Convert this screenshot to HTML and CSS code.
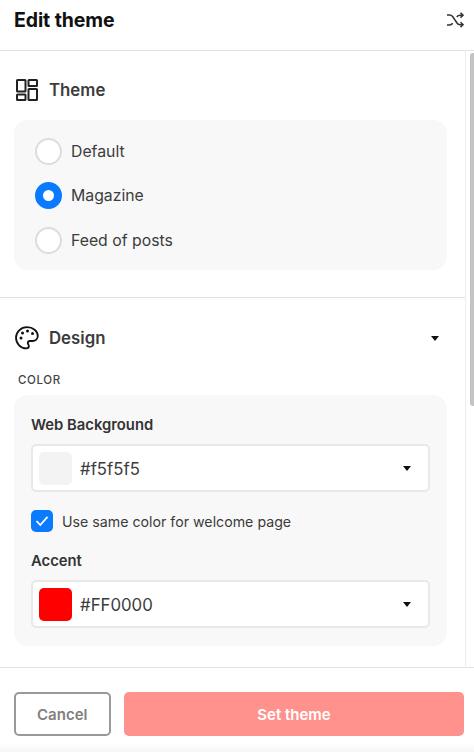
FILE: index.html
```html
<!DOCTYPE html>
<html lang="en">
<head>
<meta charset="utf-8">
<title>Edit theme</title>
<link rel="stylesheet" href="styles.css">
</head>
<body>
<div class="app">
  <header class="topbar">
    <h1 class="title">Edit theme</h1>
    <svg class="shuffle" width="18" height="18" viewBox="0 0 18 18" fill="none" stroke="#333" stroke-width="1.5"><path d="M1 4h2.500c1.500 0 2.500.7 3.300 1.800l4.200 6.200c.7 1.100 1.700 1.700 3 1.700h2.500"/><path d="M1 14h2.500c1.500 0 2.500-.7 3.200-1.700M10.800 6c.8-1.200 1.800-1.800 3.200-1.800h2.500"/><path d="M14.500 1.800 17 4.200l-2.500 2.400M14.500 11.300l2.500 2.400-2.500 2.400"/></svg>
  </header>
  <div class="body">
    <main class="scroll">
      <section class="section theme">
        <div class="section-head">
          <svg class="section-icon" width="24" height="24" viewBox="0 0 24 24" fill="none" stroke="#222" stroke-width="2"><rect x="2" y="2" width="8.500" height="11.500" rx=".5"/><rect x="13.500" y="2" width="8.500" height="6" rx=".5"/><rect x="2" y="16.500" width="8.500" height="5.500" rx=".5"/><rect x="13.500" y="11" width="8.500" height="11" rx=".5"/></svg>
          <h2 class="section-title">Theme</h2>
        </div>
        <div class="panel radios">
          <div class="radio-row"><span class="radio"></span><span>Default</span></div>
          <div class="radio-row"><span class="radio on"></span><span>Magazine</span></div>
          <div class="radio-row"><span class="radio"></span><span>Feed of posts</span></div>
        </div>
      </section>
      <section class="section design">
        <div class="section-head">
          <svg class="section-icon" width="24" height="24" viewBox="0 0 24 24" fill="none" stroke="#111" stroke-width="1.800"><path d="M12 1.200C5.800 1.200 1 5.900 1 11.800c0 5.800 4.700 10.600 10.400 10.600 1.500 0 2.500-1 2.500-2.300 0-.7-.3-1.200-.6-1.700-.3-.4-.5-.9-.5-1.400 0-1.200 1-2 2.200-2h2.500c3 0 5.300-2.200 5.300-5C22.800 5 18 1.200 12 1.200Z"/><g fill="#111" stroke="none"><circle cx="6" cy="12" r="1.500"/><circle cx="7.500" cy="7" r="1.500"/><circle cx="12.500" cy="5" r="1.500"/><circle cx="17.500" cy="7.500" r="1.500"/></g></svg>
          <h2 class="section-title">Design</h2>
          <span class="caret head-caret"></span>
        </div>
        <div class="eyebrow">COLOR</div>
        <div class="panel fields">
          <div class="field-label">Web Background</div>
          <div class="select">
            <span class="swatch pale"></span>
            <span class="select-value">#f5f5f5</span>
            <span class="caret"></span>
          </div>
          <div class="check-row">
            <span class="check"><svg width="16" height="16" viewBox="0 0 16 16" fill="none" stroke="#fff" stroke-width="1.800"><path d="M2.500 8 6.300 12 13.500 3.800"/></svg></span>
            <span>Use same color for welcome page</span>
          </div>
          <div class="field-label">Accent</div>
          <div class="select">
            <span class="swatch red"></span>
            <span class="select-value">#FF0000</span>
            <span class="caret"></span>
          </div>
        </div>
      </section>
    </main>
    <div class="scrollbar"><div class="thumb"></div></div>
  </div>
  <footer class="footer">
    <button class="btn cancel">Cancel</button>
    <button class="btn primary">Set theme</button>
  </footer>
</div>
</body>
</html>
```
FILE: styles.css
```css
* { box-sizing: border-box; }
html, body { margin: 0; padding: 0; height: 100%; background: #fff; overflow: hidden; }
body { font-family: Inter, "Liberation Sans", sans-serif; color: #3a3a3a; }
.app { width: 474px; height: 752px; display: flex; flex-direction: column; }
.topbar { height: 51px; flex: none; padding: 0 10px 11px 14px; display: flex; align-items: center; justify-content: space-between; border-bottom: 1px solid #e2e2e2; }
.title { margin: 0; font-size: 19.500px; font-weight: 700; color: #111; letter-spacing: -0.1px; }
.body { flex: 1; min-height: 0; display: flex; }
.scroll { flex: 1; min-width: 0; overflow: hidden; }
.section { padding: 0 18px 0 14px; }
.theme { height: 247px; padding-top: 25px; border-bottom: 1px solid #e2e2e2; }
.design { padding-top: 26px; }
.section-head { display: flex; align-items: center; gap: 10px; height: 28px; }
.section-icon { flex: none; margin-left: 1px; }
.section-title { margin: 0; font-size: 16.800px; font-weight: 600; color: #3c3c3c; }
.panel { background: #f8f8f8; border-radius: 14px; }
.radios { margin-top: 16px; height: 150px; padding: 18px 21px 0; display: flex; flex-direction: column; gap: 18.500px; }
.radio-row { height: 26px; display: flex; align-items: center; gap: 9px; font-size: 15.800px; color: #3c3c3c; flex: none; }
.radio { width: 27px; height: 27px; border-radius: 50%; background: #fff; border: 2px solid #dcdcdc; flex: none; }
.radio.on { background: #fff; border: 8px solid #0a7aff; }
.head-caret { margin-left: auto; margin-right: 8px; }
.caret { width: 0; height: 0; border-left: 4.500px solid transparent; border-right: 4.500px solid transparent; border-top: 5px solid #111; flex: none; }
.eyebrow { margin: 20px 0 0 4px; height: 16px; font-size: 11.500px; line-height: 16px; font-weight: 500; letter-spacing: .6px; color: #444; }
.fields { margin-top: 7px; height: 251px; padding: 20px 17px 0; }
.field-label { font-size: 14.800px; line-height: 20px; font-weight: 600; color: #333; }
.select { margin-top: 9px; width: 399px; height: 48px; padding: 0 17px 0 6px; background: #fff; border: 2px solid #e8e8e8; border-radius: 5px; display: flex; align-items: center; }
.swatch { width: 33px; height: 33px; border-radius: 5px; flex: none; }
.pale { background: #f3f3f3; }
.red { background: #ff0000; }
.select-value { margin-left: 8px; padding-top: 1px; flex: 1; font-size: 16.800px; color: #3c3c3c; }
.check-row { margin-top: 18px; margin-bottom: 19px; height: 22px; display: flex; align-items: center; gap: 9px; font-size: 14.200px; color: #3c3c3c; }
.check { width: 22px; height: 22px; border-radius: 5px; background: #0a7aff; display: flex; align-items: center; justify-content: center; flex: none; }
.scrollbar { width: 9px; flex: none; border-left: 1px solid #ededed; padding: 2px 0 0 4px; }
.thumb { width: 4px; height: 353px; background: #c4c4c4; border-radius: 3px 0 0 3px; }
.footer { height: 85px; flex: none; padding: 24px 10px 0 14px; border-top: 1px solid #e2e2e2; display: flex; gap: 13.500px; background: linear-gradient(#fff 90%, #f6f6f6); align-items: flex-start; }
.btn { height: 44px; font-family: inherit; font-size: 15px; font-weight: 600; border-radius: 5px; padding: 0; }
.cancel { width: 96.500px; background: #fff; border: 2px solid #999; color: #7f7f7f; }
.primary { flex: 1; background: #ff928d; border: 0; color: #fff; }
```
